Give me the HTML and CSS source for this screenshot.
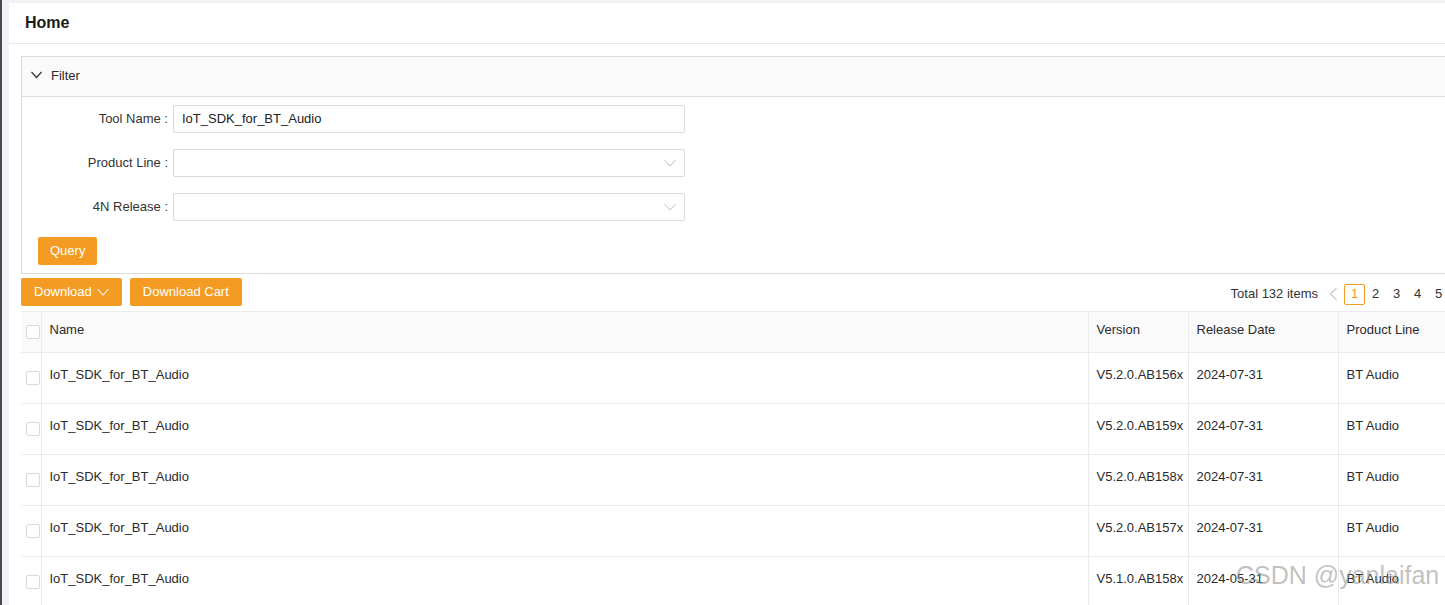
FILE: index.html
```html
<!DOCTYPE html>
<html>
<head>
<meta charset="utf-8">
<link rel="stylesheet" href="styles.css">
</head>
<body>
<div class="shell">
  <main class="main">
    <header class="page-head"><h1>Home</h1></header>
    <div class="content">
      <section class="filter">
        <div class="filter-head">
          <svg class="chev" width="11" height="8" viewBox="0 0 11 8"><path d="M0.5 1 L5.5 6.5 L10.5 1" fill="none" stroke="#333" stroke-width="1.2"/></svg>
          <span>Filter</span>
        </div>
        <div class="filter-body">
          <div class="form-row">
            <label class="lbl">Tool Name :</label>
            <div class="field">IoT_SDK_for_BT_Audio</div>
          </div>
          <div class="form-row">
            <label class="lbl">Product Line :</label>
            <div class="field select"><svg class="sel-arrow" width="12" height="8" viewBox="0 0 12 8"><path d="M0.5 1 L6 7 L11.5 1" fill="none" stroke="#bfbfbf" stroke-width="1"/></svg></div>
          </div>
          <div class="form-row">
            <label class="lbl">4N Release :</label>
            <div class="field select"><svg class="sel-arrow" width="12" height="8" viewBox="0 0 12 8"><path d="M0.5 1 L6 7 L11.5 1" fill="none" stroke="#bfbfbf" stroke-width="1"/></svg></div>
          </div>
          <button class="btn query">Query</button>
        </div>
      </section>

      <div class="toolbar">
        <div class="actions">
          <button class="btn dl">Download <svg width="12" height="8" viewBox="0 0 12 8"><path d="M0.5 1 L6 7 L11.5 1" fill="none" stroke="#fff" stroke-width="1.1"/></svg></button>
          <button class="btn">Download Cart</button>
        </div>
        <div class="pager">
          <span class="total">Total 132 items</span>
          <svg class="prev" width="9" height="14" viewBox="0 0 9 14"><path d="M7.5 1 L1.5 7 L7.5 13" fill="none" stroke="#c8c8c8" stroke-width="1.1"/></svg>
          <span class="pg active">1</span>
          <span class="pg">2</span>
          <span class="pg">3</span>
          <span class="pg">4</span>
          <span class="pg">5</span>
          <span class="pg">…</span>
          <span class="pg">27</span>
        </div>
      </div>

      <table class="grid">
        <colgroup>
          <col class="c-chk"><col class="c-name"><col class="c-ver"><col class="c-date"><col class="c-line">
        </colgroup>
        <thead>
          <tr><th><span class="cb"></span></th><th>Name</th><th>Version</th><th>Release Date</th><th>Product Line</th></tr>
        </thead>
        <tbody>
          <tr><td><span class="cb"></span></td><td>IoT_SDK_for_BT_Audio</td><td>V5.2.0.AB156x</td><td>2024-07-31</td><td>BT Audio</td></tr>
          <tr><td><span class="cb"></span></td><td>IoT_SDK_for_BT_Audio</td><td>V5.2.0.AB159x</td><td>2024-07-31</td><td>BT Audio</td></tr>
          <tr><td><span class="cb"></span></td><td>IoT_SDK_for_BT_Audio</td><td>V5.2.0.AB158x</td><td>2024-07-31</td><td>BT Audio</td></tr>
          <tr><td><span class="cb"></span></td><td>IoT_SDK_for_BT_Audio</td><td>V5.2.0.AB157x</td><td>2024-07-31</td><td>BT Audio</td></tr>
          <tr><td><span class="cb"></span></td><td>IoT_SDK_for_BT_Audio</td><td>V5.1.0.AB158x</td><td>2024-05-31</td><td>BT Audio</td></tr>
        </tbody>
      </table>
    </div>
  </main>
</div>
<div class="watermark">CSDN @yanlaifan</div>
</body>
</html>
```

FILE: styles.css
```css
html, body {
  margin: 0;
  padding: 0;
  overflow: hidden;
  height: 605px;
}
body {
  background: #f0f2f5;
  font-family: "Liberation Sans", Arial, sans-serif;
  font-size: 13px;
  color: #2a2a2a;
  position: relative;
}
.shell {
  border-left: 2px solid #4a4a4a;
  padding: 3px 0 0 7px;
  height: 602px;
}
.main {
  background: #fff;
  width: 1482px;
  height: 602px;
}
.page-head {
  height: 41px;
  box-sizing: border-box;
  padding: 0 0 0 16px;
  border-bottom: 1px solid #e8e8e8;
  display: flex;
  align-items: center;
}
.page-head h1 {
  margin: 0;
  font-size: 16px;
  font-weight: 700;
  color: #1a1a1a;
}
.content {
  padding: 12px 0 0 12px;
}
.filter {
  border: 1px solid #dcdcdc;
}
.filter-head {
  height: 40px;
  box-sizing: border-box;
  padding: 0 0 3px 9px;
  background: #fafafa;
  border-bottom: 1px solid #dcdcdc;
  display: flex;
  align-items: center;
  gap: 9px;
}
.filter-body {
  padding: 8px 0 8px 16px;
}
.form-row {
  display: flex;
  align-items: center;
  margin-bottom: 16px;
}
.lbl {
  width: 130px;
  text-align: right;
  padding-right: 5px;
  padding-bottom: 2px;
  color: #333;
}
.field {
  width: 512px;
  height: 28px;
  box-sizing: border-box;
  border: 1px solid #d9d9d9;
  border-radius: 2px;
  padding: 0 0 2px 8px;
  display: flex;
  align-items: center;
  color: #222;
}
.field.select {
  justify-content: flex-end;
  padding: 0 8px 0 0;
}
.btn {
  background: #f39b22;
  color: #fff;
  border: none;
  border-radius: 2px;
  height: 28px;
  padding: 0 13px 1px;
  font-family: inherit;
  font-size: 13px;
  display: inline-flex;
  align-items: center;
  gap: 5px;
}
.query {
  padding: 0 12px 1px;
}
.btn svg {
  margin-top: 1px;
}
.toolbar {
  display: flex;
  justify-content: space-between;
  align-items: center;
  margin-top: 4px;
  height: 28px;
}
.actions {
  display: flex;
  gap: 8px;
}
.pager {
  display: flex;
  align-items: center;
  margin-top: 4px;
  color: #333;
}
.total {
  margin-right: 11px;
  padding-bottom: 1px;
}
.prev {
  margin-right: 6px;
}
.pg {
  min-width: 21px;
  height: 21px;
  box-sizing: border-box;
  display: inline-flex;
  align-items: center;
  justify-content: center;
  border: 1px solid transparent;
  border-radius: 2px;
  padding-bottom: 1px;
}
.pg.active {
  border-color: #f39b22;
  color: #f39b22;
}
.grid {
  margin-top: 5px;
  border-collapse: collapse;
  table-layout: fixed;
  width: 1460px;
}
.c-chk { width: 20px; }
.c-name { width: 1047px; }
.c-ver { width: 100px; }
.c-date { width: 150px; }
.c-line { width: 143px; }
.grid th, .grid td {
  border: 1px solid #ebebeb;
  text-align: left;
  padding: 0 8px 8px;
  font-weight: 400;
  white-space: nowrap;
}
.grid th:first-child, .grid td:first-child {
  padding: 0 0 0 5px;
  border-left: none;
}
.grid thead th {
  background: #fafafa;
  height: 34px;
  padding-bottom: 6px;
}
.grid thead th:first-child {
  padding-bottom: 0;
  height: 40px;
}
.grid tbody td {
  height: 42px;
}
.grid tbody td:first-child {
  height: 50px;
}
.cb {
  display: block;
  width: 14px;
  height: 14px;
  box-sizing: border-box;
  border: 1px solid #d9d9d9;
  border-radius: 2px;
  background: #fff;
}
.watermark {
  position: absolute;
  left: 1236px;
  top: 561px;
  font-family: "Liberation Sans", sans-serif;
  font-size: 25px;
  color: rgba(140, 140, 140, 0.55);
  white-space: nowrap;
}
```
